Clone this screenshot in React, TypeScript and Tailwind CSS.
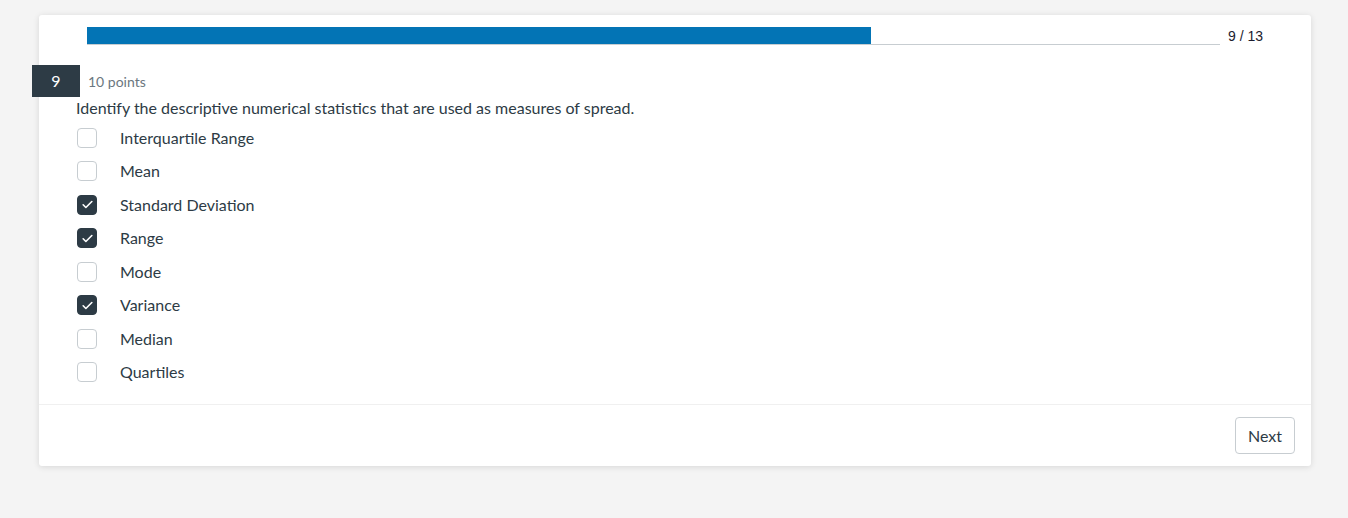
import { useState } from 'react'

interface Option {
  id: string
  label: string
}

const OPTIONS: Option[] = [
  { id: 'iqr', label: 'Interquartile Range' },
  { id: 'mean', label: 'Mean' },
  { id: 'sd', label: 'Standard Deviation' },
  { id: 'range', label: 'Range' },
  { id: 'mode', label: 'Mode' },
  { id: 'variance', label: 'Variance' },
  { id: 'median', label: 'Median' },
  { id: 'quartiles', label: 'Quartiles' },
]

function CheckIcon() {
  return (
    <svg className="h-[13px] w-[13px]" fill="none" stroke="currentColor" viewBox="0 0 24 24">
      <path strokeLinecap="round" strokeLinejoin="round" strokeWidth={3} d="M4 12.5l5 5L20 6.5" />
    </svg>
  )
}

export default function App() {
  const [checked, setChecked] = useState<Record<string, boolean>>({
    sd: true,
    range: true,
    variance: true,
  })

  const current = 9
  const total = 13

  return (
    <div className="min-h-[518px] bg-[#f4f4f4] pt-[15px] font-['Lato','Noto_Sans',sans-serif] text-[#2d3b45]">
      <div className="ml-[39px] w-[1272px] rounded-[3px] bg-white pt-[12px] shadow-[0_1px_6px_rgba(0,0,0,0.12)]">
        {/* Progress */}
        <div className="flex h-[18px] items-center pl-[48px]">
          <div className="h-[18px] w-[1133px] border-b border-[#c7cdd1]">
            <div className="h-[17px] bg-[#0374b5]" style={{ width: `${(current / total) * 100}%` }} />
          </div>
          <span className="ml-[8px] font-['Liberation_Sans',Arial,sans-serif] text-[14px] leading-[18px] text-[#1b1b2e]">
            {current} / {total}
          </span>
        </div>

        {/* Question header */}
        <div className="mt-[20px] flex items-center">
          <div className="-ml-[7px] flex h-[32px] w-[48px] items-center justify-center bg-[#2d3b45] text-[16px] text-white">
            {current}
          </div>
          <span className="ml-[8px] text-[14px] text-[#6b7780]">10 points</span>
        </div>

        <div className="pl-[37px]">
          <p className="text-[16px] leading-[22px]">
            Identify the descriptive numerical statistics that are used as measures of spread.
          </p>

          <div className="mt-[2px] mb-[15px]">
            {OPTIONS.map((opt) => {
              const on = !!checked[opt.id]
              return (
                <label key={opt.id} className="flex h-[33.5px] cursor-pointer items-center">
                  <button
                    type="button"
                    onClick={() => setChecked((c) => ({ ...c, [opt.id]: !c[opt.id] }))}
                    className={`ml-[1px] flex h-[20px] w-[20px] items-center justify-center rounded-[4px] border ${
                      on ? 'border-[#2d3b45] bg-[#2d3b45] text-white' : 'border-[#c7cdd1] bg-white'
                    }`}
                  >
                    {on && <CheckIcon />}
                  </button>
                  <span className="ml-[23px] text-[16px]">{opt.label}</span>
                </label>
              )
            })}
          </div>
        </div>

        {/* Footer */}
        <div className="flex justify-end border-t border-[#f0f0f0] px-[16px] pt-[12px] pb-[12px]">
          <button
            type="button"
            className="h-[37px] w-[60px] rounded-[4px] border border-[#c7cdd1] bg-white text-[16px] text-[#2d3b45]"
          >
            Next
          </button>
        </div>
      </div>
    </div>
  )
}
